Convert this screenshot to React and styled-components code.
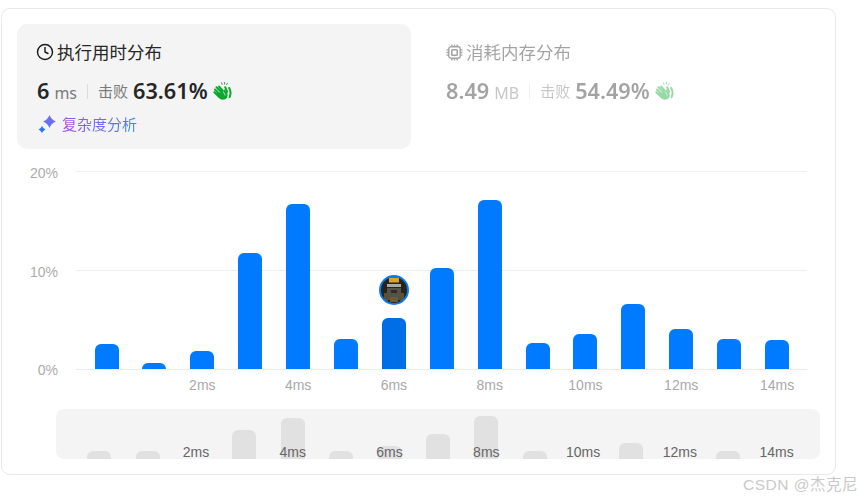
import React from "react";
import styled, { createGlobalStyle } from "styled-components";
import { Clock } from "lucide-react";

const SANS = `"Noto Sans", "Noto Sans CJK SC", sans-serif`;
const CJK = `"Noto Sans CJK SC", "Noto Sans", sans-serif`;
const ARIAL = `"Liberation Sans", "Noto Sans CJK SC", sans-serif`;

const Global = createGlobalStyle`
  html, body { margin: 0; background: #fff; }
  body { width: 861px; height: 499px; overflow: hidden; }
  * { box-sizing: border-box; }
`;

const Page = styled.div`
  padding: 8px 0 0 1px;
  display: flex;
  flex-direction: column;
  align-items: flex-start;
`;
const Card = styled.section`
  width: 835px;
  height: 467px;
  border: 1px solid #e9e9e9;
  border-radius: 9px;
  padding: 15px 15px 0;
  background: #fff;
`;
const Panels = styled.div`
  display: flex;
  gap: 15px;
`;
const Panel = styled.div`
  width: 394px;
  height: 125px;
  border-radius: 10px;
  padding: 16px 20px 0;
  background: ${(p) => (p.$active ? "#f4f4f4" : "transparent")};
  & > * { opacity: ${(p) => (p.$active ? 1 : 0.42)}; }
`;
const Title = styled.div`
  display: flex;
  align-items: center;
  gap: 3px;
  height: 24px;
  font: 400 17.5px/24px ${CJK};
  color: #262626;
`;
const ClockSlot = styled.span`
  display: flex;
  margin-left: -1px;
`;
const Stats = styled.div`
  display: flex;
  align-items: baseline;
  height: 30px;
  margin-top: 12px;
  color: #1a1a1a;
`;
const Value = styled.span`
  font: 600 21.7px/30px ${SANS};
  color: #262626;
`;
const Unit = styled.span`
  font: 400 16px/30px ${SANS};
  color: #7a7a7a;
  margin-left: 5px;
`;
const Divider = styled.span`
  width: 1px;
  height: 15px;
  background: #dcdcdc;
  margin: 0 10px;
  align-self: center;
`;
const Beat = styled.span`
  font: 400 15px/30px ${CJK};
  color: #7a7a7a;
  margin-right: 5px;
  align-self: center;
`;
const ClapSlot = styled.span`
  align-self: center;
  display: flex;
  margin-left: 5px;
`;
const Analyze = styled.div`
  display: flex;
  align-items: center;
  gap: 5px;
  margin-top: 7px;
  height: 22px;
  margin-left: 1px;
`;
const GradientText = styled.span`
  font: 400 15px/22px ${CJK};
  background: linear-gradient(90deg, #a94fe0, #2f8cff);
  -webkit-background-clip: text;
  background-clip: text;
  color: transparent;
`;

const ChartRow = styled.div`
  display: flex;
  margin-top: 22px;
  align-items: flex-start;
`;
const YAxis = styled.div`
  width: 41px;
  height: 217px;
  margin: -8px 18px 0 0;
  display: flex;
  flex-direction: column;
  justify-content: space-between;
  align-items: flex-end;
  flex: none;
`;
const YLabel = styled.span`
  font: 400 14px/20px ${ARIAL};
  color: #acacac;
`;
const PlotColumn = styled.div`
  width: 731px;
  flex: none;
`;
const Plot = styled.div`
  position: relative;
  height: 199px;
  border-bottom: 1px solid #ebebeb;
`;
const GridLine = styled.div`
  position: absolute;
  left: 0;
  right: 0;
  top: ${(p) => p.$top}px;
  height: 1px;
  background: #eeeeee;
`;
const Bars = styled.div`
  position: absolute;
  inset: 0;
  display: grid;
  grid-template-columns: repeat(15, 47.9px);
  padding-left: 6.6px;
  align-items: end;
  justify-items: center;
`;
const Bar = styled.div`
  width: 24px;
  border-radius: 6px 6px 0 0;
  background: ${(p) => (p.$current ? "#006ee6" : "#007aff")};
`;
const Avatar = styled.svg`
  position: absolute;
  left: 303px;
  top: 104px;
  width: 30px;
  height: 30px;
`;
const XAxis = styled.div`
  display: grid;
  grid-template-columns: repeat(15, 47.9px);
  padding-left: 6.6px;
  margin-top: 5px;
  height: 20px;
  justify-items: center;
`;
const XLabel = styled.span`
  font: 400 14px/20px ${ARIAL};
  color: #a9a9a9;
  white-space: nowrap;
`;
const Mini = styled.div`
  width: 764px;
  height: 50px;
  margin: 14px 0 0 39px;
  background: #f4f4f4;
  border-radius: 8px;
  overflow: hidden;
  display: grid;
  grid-template-columns: repeat(15, 48.4px);
  padding-left: 19px;
`;
const MiniCell = styled.div`
  display: grid;
  grid-template-rows: 50px;
  align-items: end;
  justify-items: center;
  height: 50px;
`;
const MiniBar = styled.div`
  grid-area: 1 / 1;
  width: 24px;
  border-radius: 6px 6px 0 0;
  background: #e1e1e1;
`;
const MiniLabel = styled.span`
  grid-area: 1 / 1;
  font: 400 14px/20px ${ARIAL};
  color: #666;
  white-space: nowrap;
  margin-bottom: -3px;
`;
const Watermark = styled.div`
  width: 860px;
  text-align: right;
  padding-right: 3px;
  font: 400 15.5px/18px ${ARIAL};
  color: #cacaca;
  letter-spacing: 0.5px;
  margin-top: 1px;
`;

const tops = [344, 363, 351, 253, 204, 339, 318, 268, 200, 343, 334, 304, 329, 339, 340];
const miniTops = [451, 451, 0, 430, 418, 451, 446, 434, 416, 451, 0, 443, 0, 451, 0];
const labelFor = (i) => (i > 0 && i % 2 === 0 ? `${i}ms` : "");

function ChipIcon() {
  return (
    <svg width="17" height="17" viewBox="0 0 16 16" fill="none" stroke="#262626" strokeWidth="1.3">
      <rect x="2.600" y="2.600" width="10.800" height="10.800" rx="2" />
      <rect x="5.400" y="5.400" width="5.200" height="5.200" rx="0.800" strokeWidth="1.500" />
      <path d="M5.500 0.500v2M8 0.500v2M10.500 0.500v2M5.500 13.500v2M8 13.500v2M10.500 13.500v2M0.500 5.500h2M0.500 8h2M0.500 10.500h2M13.500 5.500h2M13.500 8h2M13.500 10.500h2" />
    </svg>
  );
}

function ClapIcon() {
  return (
    <svg width="19" height="19" viewBox="0 0 19 19" fill="none" strokeLinecap="round">
      <g stroke="#0aa82f">
        <path d="M8.600 0.800l0.500 1.600M11.600 0.400l-0.100 1.700M14.300 1.400l-0.800 1.400" strokeWidth="0.900" />
        <path d="M2 7.500l5 5M1.400 10.200l4.600 4.600M3.600 5.300l5.400 5.400M6.200 4.600l4.200 4.800" strokeWidth="2.100" />
        <path d="M16.200 6c1.600 3 1.800 6.200 0.400 9.200" strokeWidth="2" />
        <path d="M12.200 5.200l2 4.600" strokeWidth="2" />
      </g>
      <path d="M3 11.500l3.600 5.200c2.400 1.700 6 1.200 7.400-0.900 1-1.700 0.900-3.700 0-5.400l-2.300-3.400-1.200 2.600z" fill="#0aa82f" />
      <path d="M10.400 9.800l1.800 3.400" stroke="#f4f4f4" strokeWidth="0.700" />
    </svg>
  );
}

function SparkIcon() {
  return (
    <svg width="19" height="19" viewBox="0 0 19 19">
      <defs>
        <linearGradient id="spark" x1="0" y1="1" x2="1" y2="0">
          <stop offset="0" stopColor="#4a78fb" />
          <stop offset="1" stopColor="#8a63f2" />
        </linearGradient>
      </defs>
      <path d="M11.500 0Q13.300 4.700 18 6.500Q13.300 8.300 11.500 13Q9.700 8.300 5 6.500Q9.700 4.700 11.500 0Z" fill="url(#spark)" />
      <path d="M4 11Q5 13.500 7.500 14.500Q5 15.500 4 18Q3 15.500 0.500 14.500Q3 13.500 4 11Z" fill="#2f74f5" />
    </svg>
  );
}

function AvatarArt() {
  return (
    <Avatar viewBox="0 0 30 30">
      <defs>
        <clipPath id="av"><circle cx="15" cy="15" r="14" /></clipPath>
        <filter id="soft"><feGaussianBlur stdDeviation="0.700" /></filter>
      </defs>
      <g clipPath="url(#av)">
        <rect width="30" height="30" fill="#25231e" />
        <g filter="url(#soft)">
          <rect x="10" y="2.500" width="10" height="5" fill="#d9a520" />
          <rect x="8" y="9" width="14" height="3" fill="#a9a9a2" />
          <rect x="8" y="13" width="14" height="12" fill="#55534a" />
          <rect x="12" y="15" width="6" height="3" fill="#2e2d26" />
          <rect x="5" y="18" width="4" height="8" fill="#5e4f2e" />
          <rect x="21" y="18" width="4" height="8" fill="#5e4f2e" />
          <rect x="11" y="22" width="8" height="5" fill="#6e5c33" />
        </g>
      </g>
      <circle cx="15" cy="15" r="14" fill="none" stroke="#0a7bf0" strokeWidth="2" />
    </Avatar>
  );
}

export default function App() {
  return (
    <Page>
      <Global />
      <Card>
        <Panels>
          <Panel $active>
            <Title><ClockSlot><Clock size={18} color="#1a1a1a" strokeWidth={1.9} /></ClockSlot>执行用时分布</Title>
            <Stats>
              <Value>6</Value><Unit>ms</Unit><Divider /><Beat>击败</Beat>
              <Value>63.61%</Value><ClapSlot><ClapIcon /></ClapSlot>
            </Stats>
            <Analyze><SparkIcon /><GradientText>复杂度分析</GradientText></Analyze>
          </Panel>
          <Panel>
            <Title><ChipIcon />消耗内存分布</Title>
            <Stats>
              <Value>8.49</Value><Unit>MB</Unit><Divider /><Beat>击败</Beat>
              <Value>54.49%</Value><ClapSlot><ClapIcon /></ClapSlot>
            </Stats>
          </Panel>
        </Panels>
        <ChartRow>
          <YAxis>
            <YLabel>20%</YLabel><YLabel>10%</YLabel><YLabel>0%</YLabel>
          </YAxis>
          <PlotColumn>
            <Plot>
              <GridLine $top={0} />
              <GridLine $top={99} />
              <Bars>
                {tops.map((t, i) => (
                  <Bar key={i} $current={i === 6} style={{ height: 369 - t }} />
                ))}
              </Bars>
              <AvatarArt />
            </Plot>
            <XAxis>
              {tops.map((_, i) => <XLabel key={i}>{labelFor(i)}</XLabel>)}
            </XAxis>
          </PlotColumn>
        </ChartRow>
        <Mini>
          {miniTops.map((t, i) => (
            <MiniCell key={i}>
              {t > 0 && <MiniBar style={{ height: 459 - t }} />}
              {labelFor(i) && <MiniLabel>{labelFor(i)}</MiniLabel>}
            </MiniCell>
          ))}
        </Mini>
      </Card>
      <Watermark>CSDN @杰克尼</Watermark>
    </Page>
  );
}
